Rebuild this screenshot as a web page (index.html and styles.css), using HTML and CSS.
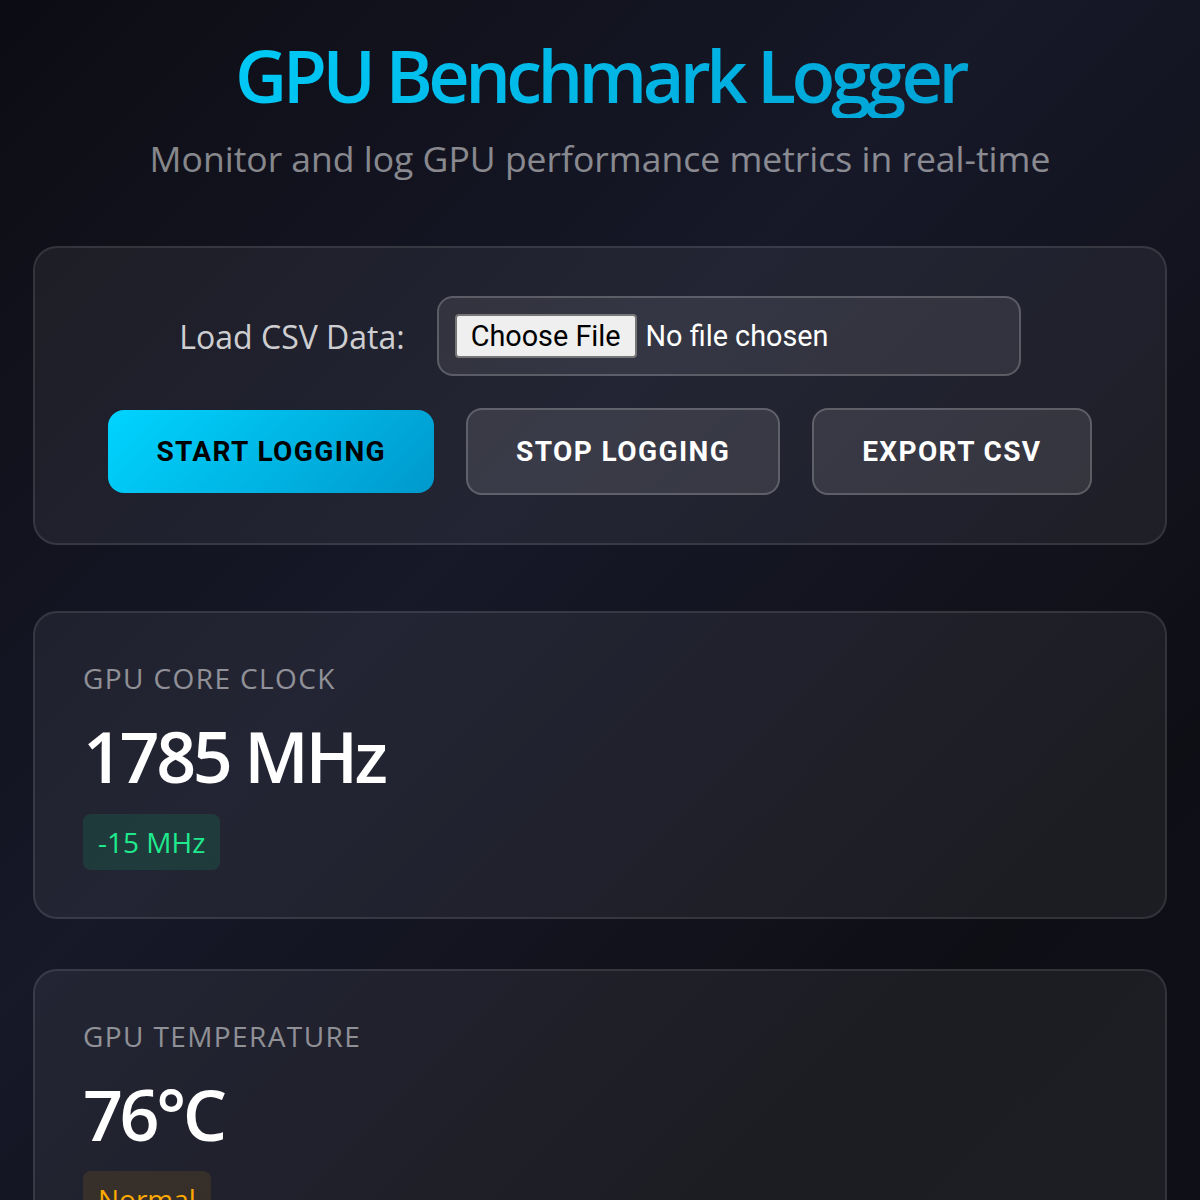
FILE: index.html
```html
<!DOCTYPE html>
<html lang="en">
<head>
<meta charset="utf-8">
<title>GPU Benchmark Logger</title>
<link rel="stylesheet" href="styles.css">
</head>
<body>
<div class="container">
  <header class="header">
    <h1 class="title">GPU Benchmark Logger</h1>
    <p class="subtitle">Monitor and log GPU performance metrics in real-time</p>
  </header>

  <section class="panel">
    <div class="file-row">
      <label class="file-label" for="csv">Load CSV Data:</label>
      <input class="file-input" id="csv" type="file" accept=".csv">
    </div>
    <div class="button-row">
      <button class="btn btn-primary">Start Logging</button>
      <button class="btn btn-secondary">Stop Logging</button>
      <button class="btn btn-secondary">Export CSV</button>
    </div>
  </section>

  <section class="metric-card">
    <div class="metric-label">GPU Core Clock</div>
    <div class="metric-value">1785 MHz</div>
    <span class="metric-badge badge-good">-15 MHz</span>
  </section>

  <section class="metric-card">
    <div class="metric-label">GPU Temperature</div>
    <div class="metric-value">76°C</div>
    <span class="metric-badge badge-warn">Normal</span>
  </section>
</div>
</body>
</html>
```
FILE: styles.css
```css
* {
  box-sizing: border-box;
}

html {
  background: linear-gradient(135deg, #0c0d13 0%, #171828 42%, #0e0f15 80%, #0f1017 100%) fixed;
  min-height: 100%;
}

body {
  margin: 0;
  font-family: "Open Sans", "Noto Sans", sans-serif;
  color: #ffffff;
}

.container {
  padding: 32px 33px;
}

.header {
  text-align: center;
  margin-bottom: 64px;
}

.title {
  margin: 0 0 16px;
  font-size: 72px;
  font-weight: 600;
  letter-spacing: -4.6px;
  line-height: 1.2;
  background: linear-gradient(135deg, #00d4ff 0%, #0099cc 100%);
  -webkit-background-clip: text;
  background-clip: text;
  color: transparent;
}

.subtitle {
  margin: 0;
  font-size: 35.5px;
  font-weight: 400;
  color: rgba(255, 255, 255, 0.5);
}

.panel {
  background: rgba(255, 255, 255, 0.06);
  border: 2px solid rgba(255, 255, 255, 0.1);
  border-radius: 24px;
  padding: 48px;
  margin-bottom: 66px;
}

.file-row {
  display: flex;
  justify-content: center;
  align-items: center;
  gap: 32px;
  margin-bottom: 32px;
}

.file-label {
  font-size: 32px;
  color: rgba(255, 255, 255, 0.8);
}

.file-input {
  width: 584px;
  height: 80px;
  padding: 16px;
  border: 2px solid rgba(255, 255, 255, 0.2);
  border-radius: 16px;
  background: rgba(255, 255, 255, 0.08);
  color: #ffffff;
  font-family: Roboto, "Liberation Sans", sans-serif;
  font-size: 28.8px;
}

.file-input::file-selector-button {
  font: inherit;
  color: #000000;
  background: #efefef;
  border: 2px solid #767676;
  border-radius: 4px;
  padding: 2px 14px;
  margin-right: 9px;
  height: 44px;
}

.button-row {
  display: flex;
  justify-content: center;
  align-items: center;
  gap: 32px;
}

.btn {
  font-family: Roboto, "Liberation Sans", sans-serif;
  font-size: 28px;
  font-weight: 700;
  letter-spacing: 1.4px;
  text-transform: uppercase;
  padding: 25px 48px;
  border-radius: 16px;
  cursor: pointer;
}

.btn-primary {
  border: none;
  color: #000000;
  background: linear-gradient(135deg, #00d4ff 0%, #0099cc 100%);
}

.btn-secondary {
  border: 2px solid rgba(255, 255, 255, 0.2);
  color: #ffffff;
  background: rgba(255, 255, 255, 0.1);
}

.metric-card {
  background: rgba(255, 255, 255, 0.06);
  border: 2px solid rgba(255, 255, 255, 0.1);
  border-radius: 24px;
  padding: 46px 48px 47px;
  margin-bottom: 50px;
}

.metric-label {
  font-size: 28px;
  letter-spacing: 1.4px;
  text-transform: uppercase;
  color: rgba(255, 255, 255, 0.5);
  margin-bottom: 12px;
}

.metric-value {
  font-size: 70px;
  font-weight: 600;
  letter-spacing: -3.4px;
  line-height: 1.362;
  color: #ffffff;
  margin-bottom: 9px;
}

.metric-badge {
  display: inline-block;
  font-size: 28px;
  padding: 9px 15px;
  border-radius: 8px;
}

.badge-good {
  background: rgba(0, 255, 136, 0.1);
  color: #1fe98d;
}

.badge-warn {
  background: rgba(255, 170, 0, 0.1);
  color: #ffaa00;
}
```
